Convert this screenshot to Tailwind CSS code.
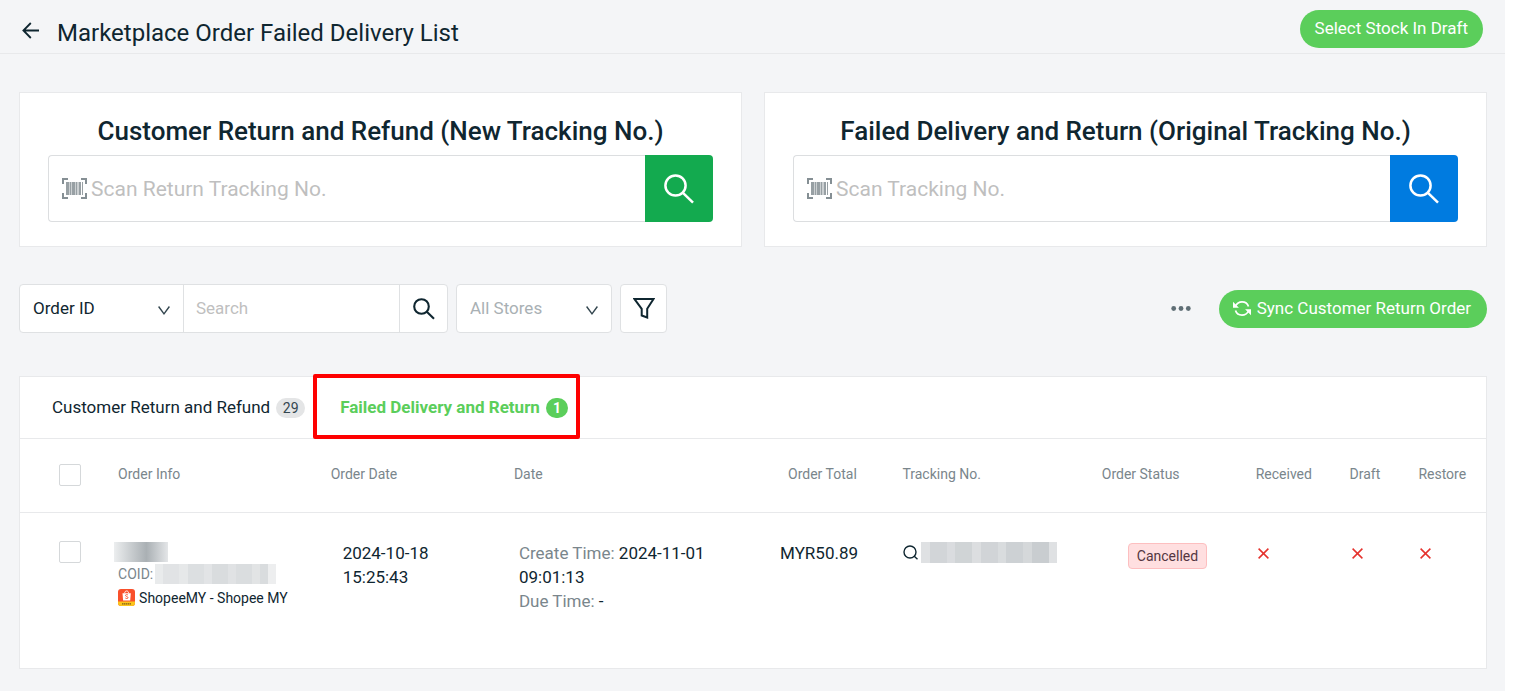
<!DOCTYPE html>
<html lang="en">
<head>
  <meta charset="UTF-8" />
  <meta name="viewport" content="width=device-width, initial-scale=1.0"/>
  <title>Marketplace Order Failed Delivery List</title>
  <script src="https://cdn.jsdelivr.net/npm/@tailwindcss/browser@4"></script>
</head>
<body class="bg-white text-[#0f2630] font-['Roboto',sans-serif]">
  <div class="mr-[31px] min-h-screen bg-[#f4f5f7]">

    <!-- Page header -->
    <header class="flex items-center h-[54px] pt-1 pl-[22px] pr-[22px] border-b border-[#e8e9eb]">
      <a href="#" aria-label="Back" class="mr-[18px] pt-1">
        <svg class="w-[17px] h-[17px]" viewBox="0 0 17 17" fill="none" stroke="currentColor" stroke-width="1.8"><path d="M17 8.500H1.500M8.800 1 1.400 8.500l7.400 7.500"/></svg>
      </a>
      <h1 class="text-[24px] leading-8 pt-2">Marketplace Order Failed Delivery List</h1>
      <button type="button" class="ml-auto h-[38px] px-[15px] rounded-full bg-[#5bce5b] text-white text-[17px]">Select Stock In Draft</button>
    </header>

    <main class="pl-[19px] pr-[18px] pt-[38px] pb-[22px]">

      <!-- Scan boxes -->
      <div class="grid grid-cols-2 gap-[22px]">
        <section class="bg-white border border-[#e8e9eb] px-7 pt-[22px] pb-6">
          <h2 class="text-center text-[26px] leading-8 font-medium mb-2"><label for="returnTracking">Customer Return and Refund (New Tracking No.)</label></h2>
          <form class="flex h-[67px]">
            <div class="flex flex-1 items-center border border-r-0 border-[#dcdee0] rounded-l pl-[13px]">
              <svg class="w-[25px] h-[21px] mr-1 shrink-0" viewBox="0 0 25 21"><path d="M1 6V1h5M19 1h5v5M24 15v5h-5M6 20H1v-5" fill="none" stroke="#858f94" stroke-width="2"/><path d="M4 4h3v13H4zM7.500 4h1.500v13H7.500zM9.500 4h4v13H9.500zM14 4h1.500v13H14zM16.500 4h2.500v13h-2.500zM20 4h1v13h-1z" fill="#98a0a4"/></svg>
              <input id="returnTracking" type="text" placeholder="Scan Return Tracking No." class="flex-1 min-w-0 h-full text-[21px] outline-none placeholder:text-[#bfbfbf]" />
            </div>
            <button type="submit" aria-label="Search" class="flex items-center justify-center w-[68px] rounded-r bg-[#13aa4f] text-white">
              <svg class="w-[30px] h-[30px]" viewBox="0 0 30 30" fill="none" stroke="currentColor" stroke-width="2.500"><circle cx="11.500" cy="11.500" r="10.100"/><path d="m18.700 18.700 10.300 10"/></svg>
            </button>
          </form>
        </section>

        <section class="bg-white border border-[#e8e9eb] px-7 pt-[22px] pb-6">
          <h2 class="text-center text-[26px] leading-8 font-medium mb-2"><label for="originalTracking">Failed Delivery and Return (Original Tracking No.)</label></h2>
          <form class="flex h-[67px]">
            <div class="flex flex-1 items-center border border-r-0 border-[#dcdee0] rounded-l pl-[13px]">
              <svg class="w-[25px] h-[21px] mr-1 shrink-0" viewBox="0 0 25 21"><path d="M1 6V1h5M19 1h5v5M24 15v5h-5M6 20H1v-5" fill="none" stroke="#858f94" stroke-width="2"/><path d="M4 4h3v13H4zM7.500 4h1.500v13H7.500zM9.500 4h4v13H9.500zM14 4h1.500v13H14zM16.500 4h2.500v13h-2.500zM20 4h1v13h-1z" fill="#98a0a4"/></svg>
              <input id="originalTracking" type="text" placeholder="Scan Tracking No." class="flex-1 min-w-0 h-full text-[21px] outline-none placeholder:text-[#bfbfbf]" />
            </div>
            <button type="submit" aria-label="Search" class="flex items-center justify-center w-[68px] rounded-r bg-[#007be0] text-white">
              <svg class="w-[30px] h-[30px]" viewBox="0 0 30 30" fill="none" stroke="currentColor" stroke-width="2.500"><circle cx="11.500" cy="11.500" r="10.100"/><path d="m18.700 18.700 10.300 10"/></svg>
            </button>
          </form>
        </section>
      </div>

      <!-- Filters -->
      <div class="flex items-center mt-[37px] text-[17px]">
        <form class="flex h-[49px] bg-white border border-[#dfe1e3] rounded">
          <div class="relative w-[164px] border-r border-[#dfe1e3]">
            <select aria-label="Search by" class="appearance-none w-full h-full pl-[13px] outline-none">
              <option>Order ID</option>
            </select>
            <svg class="absolute right-[13px] top-[21px] w-3 h-[9px] pointer-events-none" viewBox="0 0 12 9" fill="none" stroke="#33464f" stroke-width="1.400"><path d="m.6.5 5.400 7.300L11.400.5"/></svg>
          </div>
          <input type="text" aria-label="Search" placeholder="Search" class="w-[215px] px-3 outline-none placeholder:text-[#bfbfbf]" />
          <button type="submit" aria-label="Search" class="flex items-center justify-center w-[48px] border-l border-[#dfe1e3]">
            <svg class="w-[22px] h-[22px]" viewBox="0 0 22 22" fill="none" stroke="currentColor" stroke-width="2.100"><circle cx="8.500" cy="8.500" r="7.300"/><path d="m13.800 13.800 7.200 7"/></svg>
          </button>
        </form>
        <div class="relative w-[156px] h-[49px] ml-2 bg-white border border-[#dfe1e3] rounded">
          <select aria-label="Stores" class="appearance-none w-full h-full pl-[13px] text-[#a9b0b4] outline-none">
            <option>All Stores</option>
          </select>
          <svg class="absolute right-[13px] top-[21px] w-3 h-[9px] pointer-events-none" viewBox="0 0 12 9" fill="none" stroke="#33464f" stroke-width="1.400"><path d="m.6.5 5.400 7.300L11.400.5"/></svg>
        </div>
        <button type="button" aria-label="Filter" class="flex items-center justify-center w-[47px] h-[49px] ml-2 bg-white border border-[#dfe1e3] rounded">
          <svg class="w-[22px] h-[21px]" viewBox="0 0 22 21" fill="none" stroke="currentColor" stroke-width="2"><path d="M1.500 1h19l-6.300 9.800v8.700L8.700 17.500v-6.700L1.500 1z"/></svg>
        </button>

        <button type="button" aria-label="More" class="ml-auto mr-7">
          <svg class="w-[20px] h-[5px]" viewBox="0 0 20 5" fill="#5f6e75"><circle cx="2.700" cy="2.500" r="2.400"/><circle cx="10" cy="2.500" r="2.400"/><circle cx="17.300" cy="2.500" r="2.400"/></svg>
        </button>
        <button type="button" class="flex items-center h-[38px] pl-[14px] pr-4 rounded-full bg-[#5bce5b] text-white">
          <svg class="w-[18px] h-[15px] mr-[6px]" viewBox="0 0 18 15" fill="none" stroke="currentColor" stroke-width="1.700"><path d="M2.300 5.200C4 2.100 6.500.9 9 .9c3 0 5.600 1.700 6.500 4.600"/><path d="M15.700 9.800c-1.700 3.100-4.200 4.300-6.700 4.300-3 0-5.600-1.700-6.500-4.600"/><path d="M0 .8v5.900h5.900zM18 14.200V8.300h-5.900z" fill="currentColor" stroke="none"/></svg>
          Sync Customer Return Order
        </button>
      </div>

      <!-- Orders -->
      <section class="mt-[43px] bg-white border border-[#e8e9eb]">
        <nav class="flex items-center h-[62px] pt-px pl-8 border-b border-[#e8e9eb] text-[17px]">
          <a href="#" class="flex items-center">
            Customer Return and Refund
            <span class="flex items-center justify-center w-[29px] h-5 ml-[6px] rounded-full bg-[#e4e5e6] text-[14px] text-[#33464f]">29</span>
          </a>
          <a href="#" aria-current="page" class="relative flex items-center ml-[35px] font-bold text-[#5bce5b]">
            Failed Delivery and Return
            <span class="flex items-center justify-center w-[22px] h-5 ml-[6px] rounded-full bg-[#5bce5b] text-white text-[14px]">1</span>
            <span class="absolute -left-[27px] -right-[12px] -top-[21px] -bottom-[18px] border-4 border-[#fe0000] rounded-xs"></span>
          </a>
        </nav>

        <table class="w-full table-fixed text-left">
          <colgroup>
            <col class="w-[5.6%]" />
            <col class="w-[14.5%]" />
            <col class="w-[12.5%]" />
            <col class="w-[18.7%]" />
            <col class="w-[7.8%]" />
            <col class="w-[13.6%]" />
            <col class="w-[10.5%]" />
            <col class="w-[6.4%]" />
            <col class="w-[4.7%]" />
            <col class="w-[5.7%]" />
          </colgroup>
          <thead class="text-[14px] text-[#7a868c]">
            <tr class="h-[73px] border-b border-[#e8e9eb] whitespace-nowrap">
              <th class="pl-[39px]"><input type="checkbox" aria-label="Select all orders" class="block appearance-none size-[22px] border border-[#d5d8da] rounded-xs bg-white" /></th>
              <th class="px-4 pb-[2px] font-normal">Order Info</th>
              <th class="px-4 pb-[2px] font-normal">Order Date</th>
              <th class="px-4 pb-[2px] font-normal">Date</th>
              <th class="px-4 pb-[2px] font-normal">Order Total</th>
              <th class="px-4 pb-[2px] font-normal">Tracking No.</th>
              <th class="px-4 pb-[2px] font-normal">Order Status</th>
              <th class="px-4 pb-[2px] font-normal">Received</th>
              <th class="px-4 pb-[2px] font-normal">Draft</th>
              <th class="px-4 pb-[2px] font-normal">Restore</th>
            </tr>
          </thead>
          <tbody class="text-[17px] leading-6">
            <tr class="h-[156px] align-top">
              <td class="pl-[39px] pt-7"><input type="checkbox" aria-label="Select order" class="block appearance-none size-[22px] border border-[#d5d8da] rounded-xs bg-white" /></td>
              <td class="pt-[29px] text-[14px] leading-6 whitespace-nowrap">
                <!-- Masked order number -->
                <div class="w-[54px] h-5 ml-3 bg-linear-to-r from-[#eceeef] via-[#aab0b4] via-60% to-[#e4e6e8]"></div>
                <div class="flex items-center pl-4 text-[#7a868c]">
                  COID:
                  <span class="flex w-[121px] h-5 ml-[2px]">
                    <i class="flex-1 bg-[#e9ebec]"></i><i class="flex-2 bg-[#e1e3e5]"></i><i class="flex-1 bg-[#e6e8e9]"></i><i class="flex-2 bg-[#dcdfe1]"></i><i class="flex-1 bg-[#e2e4e6]"></i><i class="flex-2 bg-[#d9dcde]"></i><i class="flex-1 bg-[#e0e2e4]"></i><i class="flex-2 bg-[#dadddf]"></i><i class="flex-1 bg-[#e2e4e5]"></i><i class="flex-1 bg-[#d9dcde]"></i><i class="flex-1 bg-[#edeeef]"></i>
                  </span>
                </div>
                <div class="flex items-center pl-4">
                  <svg class="w-[17px] h-[17px] mr-1" viewBox="0 0 17 17"><rect width="17" height="17" rx="3" fill="#f9502b"/><path d="M0 12.500h17V14a3 3 0 0 1-3 3H3a3 3 0 0 1-3-3z" fill="#fbc51c"/><path d="M4.500 4.200h8.300l-.6 7.300H5.100z" fill="#fff"/><path d="M6.700 4.200c0-3 3.900-3 3.900 0" fill="none" stroke="#fff" stroke-width=".9"/><path d="M10 6c-1-.7-2.600-.5-2.500.5.1 1.200 2.500.8 2.500 2.200 0 1-1.700 1.100-2.700.3" fill="none" stroke="#f9502b" stroke-width=".9"/><path d="M4 14.800h9" stroke="#7d5a16" stroke-width="1.300" stroke-dasharray="1.400 .5"/></svg>
                  ShopeeMY - Shopee MY
                </div>
              </td>
              <td class="pl-7 pr-12 pt-7">2024-10-18 15:25:43</td>
              <td class="pl-[21px] pr-16 pt-7">
                <div><span class="text-[#7a868c]">Create Time:</span> 2024-11-01</div>
                <div>09:01:13</div>
                <div><span class="text-[#7a868c]">Due Time:</span> -</div>
              </td>
              <td class="pl-2 pt-7">MYR50.89</td>
              <td class="pl-[17px] pt-7">
                <div class="flex items-center h-6">
                  <svg class="w-[15px] h-[15px] mr-[3px]" viewBox="0 0 15 15" fill="none" stroke="currentColor" stroke-width="1.400"><circle cx="7" cy="7" r="6"/><path d="m11 11 3.500 3.200"/></svg>
                  <span class="flex w-[136px] h-[21px]">
                    <i class="flex-1 bg-[#dfe1e3]"></i><i class="flex-2 bg-[#d2d5d8]"></i><i class="flex-1 bg-[#dadcdf]"></i><i class="flex-2 bg-[#d0d4d6]"></i><i class="flex-1 bg-[#dcdee0]"></i><i class="flex-2 bg-[#d1d4d7]"></i><i class="flex-1 bg-[#d9dcde]"></i><i class="flex-2 bg-[#cdd1d4]"></i><i class="flex-1 bg-[#d5d8da]"></i><i class="flex-2 bg-[#c9cdd0]"></i><i class="flex-1 bg-[#dfe1e3]"></i>
                  </span>
                </div>
              </td>
              <td class="pl-[42px] pt-[30px]"><span class="flex items-center w-fit h-[26px] px-2 border border-[#fdbfc0] rounded bg-[#ffdfe0] text-[14px] text-[#543640]">Cancelled</span></td>
              <td class="pl-[18px] pt-[35px]"><svg role="img" aria-label="No" class="w-[11px] h-[11px]" viewBox="0 0 11 11" stroke="#e5322d" stroke-width="1.500"><path d="m.6.6 9.800 9.800M10.400.6.6 10.400"/></svg></td>
              <td class="pl-[18px] pt-[35px]"><svg role="img" aria-label="No" class="w-[11px] h-[11px]" viewBox="0 0 11 11" stroke="#e5322d" stroke-width="1.500"><path d="m.6.6 9.800 9.800M10.400.6.6 10.400"/></svg></td>
              <td class="pl-[18px] pt-[35px]"><svg role="img" aria-label="No" class="w-[11px] h-[11px]" viewBox="0 0 11 11" stroke="#e5322d" stroke-width="1.500"><path d="m.6.6 9.800 9.800M10.400.6.6 10.400"/></svg></td>
            </tr>
          </tbody>
        </table>
      </section>
    </main>
  </div>
</body>
</html>
